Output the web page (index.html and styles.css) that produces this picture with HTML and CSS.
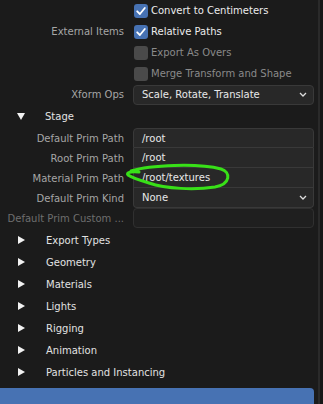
FILE: index.html
```html
<!DOCTYPE html>
<html>
<head>
<meta charset="utf-8">
<link rel="stylesheet" href="styles.css">
</head>
<body>
<div class="screen">
  <div class="panel">
    <div class="row">
      <div class="label"></div>
      <div class="check on"><svg viewBox="0 0 14 14" width="14" height="14"><path d="M3.2 7.3 L5.9 10 L10.8 4" fill="none" stroke="#fff" stroke-width="1.8" stroke-linecap="round" stroke-linejoin="round"/></svg></div>
      <div class="ctext">Convert to Centimeters</div>
    </div>
    <div class="row">
      <div class="label">External Items</div>
      <div class="check on"><svg viewBox="0 0 14 14" width="14" height="14"><path d="M3.2 7.3 L5.9 10 L10.8 4" fill="none" stroke="#fff" stroke-width="1.8" stroke-linecap="round" stroke-linejoin="round"/></svg></div>
      <div class="ctext">Relative Paths</div>
    </div>
    <div class="row">
      <div class="label"></div>
      <div class="check off"></div>
      <div class="ctext dim">Export As Overs</div>
    </div>
    <div class="row">
      <div class="label"></div>
      <div class="check off"></div>
      <div class="ctext dim">Merge Transform and Shape</div>
    </div>
    <div class="row">
      <div class="label">Xform Ops</div>
      <div class="select solo"><span>Scale, Rotate, Translate</span><svg class="chev" viewBox="0 0 8 5" width="8" height="5"><path d="M1 1 L4 4 L7 1" fill="none" stroke="#ddd" stroke-width="1.3"/></svg></div>
    </div>
    <div class="header stage">
      <span class="tri down"></span><span class="htext">Stage</span>
    </div>
    <div class="frow">
      <div class="label">Default Prim Path</div>
      <div class="field top">/root</div>
    </div>
    <div class="frow">
      <div class="label">Root Prim Path</div>
      <div class="field mid">/root</div>
    </div>
    <div class="frow">
      <div class="label">Material Prim Path</div>
      <div class="field mid">/root/textures</div>
    </div>
    <div class="frow">
      <div class="label">Default Prim Kind</div>
      <div class="select bottom"><span>None</span><svg class="chev" viewBox="0 0 8 5" width="8" height="5"><path d="M1 1 L4 4 L7 1" fill="none" stroke="#ddd" stroke-width="1.3"/></svg></div>
    </div>
    <div class="frow">
      <div class="label dimlabel">Default Prim Custom ...</div>
      <div class="field disabled"></div>
    </div>
    <div class="sections">
      <div class="header"><span class="tri right"></span><span class="htext">Export Types</span></div>
      <div class="header"><span class="tri right"></span><span class="htext">Geometry</span></div>
      <div class="header"><span class="tri right"></span><span class="htext">Materials</span></div>
      <div class="header"><span class="tri right"></span><span class="htext">Lights</span></div>
      <div class="header"><span class="tri right"></span><span class="htext">Rigging</span></div>
      <div class="header"><span class="tri right"></span><span class="htext">Animation</span></div>
      <div class="header"><span class="tri right"></span><span class="htext">Particles and Instancing</span></div>
    </div>
    <div class="bluebar"></div>
  </div>
  <div class="scrollstrip"></div>
  <svg class="scribble" viewBox="0 0 323 404" width="323" height="404">
    <path d="M131 171 C 150 165, 198 163, 221 169 C 231 172, 231 184, 215 187 C 195 190, 166 189, 149 183 C 139 180, 131 177, 128 175 C 126 173, 130 171, 139 172" fill="none" stroke="#38e018" stroke-width="3" stroke-linecap="round"/>
  </svg>
</div>
</body>
</html>
```

FILE: styles.css
```css
html, body {
  margin: 0;
  padding: 0;
  background: #1b1b1b;
}
.screen {
  position: relative;
  width: 323px;
  height: 404px;
  overflow: hidden;
  display: flex;
  font-family: "DejaVu Sans", sans-serif;
  font-size: 10px;
  color: #e4e4e4;
}
.panel {
  width: 314px;
  margin-right: 4px;
  display: flex;
  flex-direction: column;
  background: #1b1b1b;
}
.scrollstrip {
  flex: 1;
  background: #171717;
  border-left: 2px solid #2a2a2a;
}
.row {
  height: 21px;
  display: flex;
  align-items: center;
}
.frow {
  height: 20px;
  display: flex;
  align-items: center;
}
.label {
  width: 124px;
  flex: none;
  text-align: right;
  color: #a6a6a6;
  margin-right: 9px;
  white-space: nowrap;
  overflow: hidden;
}
.dimlabel {
  color: #6e6e6e;
}
.check {
  width: 14px;
  height: 14px;
  border-radius: 3px;
  flex: none;
  margin-left: 1px;
}
.check.on {
  background: #4772b3;
}
.check.off {
  background: #4a4a4a;
}
.check svg {
  display: block;
}
.ctext {
  margin-left: 3px;
  color: #ececec;
}
.ctext.dim {
  color: #8a8a8a;
}
.select, .field {
  width: 181px;
  box-sizing: border-box;
  display: flex;
  align-items: center;
  padding-left: 8px;
  background: #282828;
  border: 1px solid #393939;
  color: #e8e8e8;
}
.select {
  justify-content: space-between;
  padding-right: 6px;
}
.select.solo {
  height: 20px;
  border-radius: 4px;
}
.chev {
  display: block;
}
.field.top {
  height: 20px;
  border-radius: 4px 4px 0 0;
}
.field.mid {
  height: 20px;
  border-top: none;
}
.select.bottom {
  height: 20px;
  border-top: none;
  border-radius: 0 0 4px 4px;
}
.field.disabled {
  height: 20px;
  background: #1f1f1f;
  border: 1px solid #303030;
  border-radius: 4px;
}
.header {
  height: 22px;
  display: flex;
  align-items: center;
  color: #e2e2e2;
}
.header.stage {
  height: 23px;
}
.sections {
  margin-top: 1px;
  display: flex;
  flex-direction: column;
}
.tri {
  width: 0;
  height: 0;
  margin-left: 18px;
  flex: none;
}
.tri.right {
  border-top: 4.5px solid transparent;
  border-bottom: 4.5px solid transparent;
  border-left: 7px solid #f2f2f2;
}
.tri.down {
  margin-left: 17px;
  border-left: 4.5px solid transparent;
  border-right: 4.5px solid transparent;
  border-top: 7px solid #f2f2f2;
}
.htext {
  margin-left: 21px;
}
.tri.down + .htext {
  margin-left: 20px;
}
.bluebar {
  margin-top: 5px;
  flex: 1;
  background: #4772b3;
  border-radius: 0 4px 0 0;
}
.scribble {
  position: absolute;
  left: 0;
  top: 0;
  pointer-events: none;
}
```
